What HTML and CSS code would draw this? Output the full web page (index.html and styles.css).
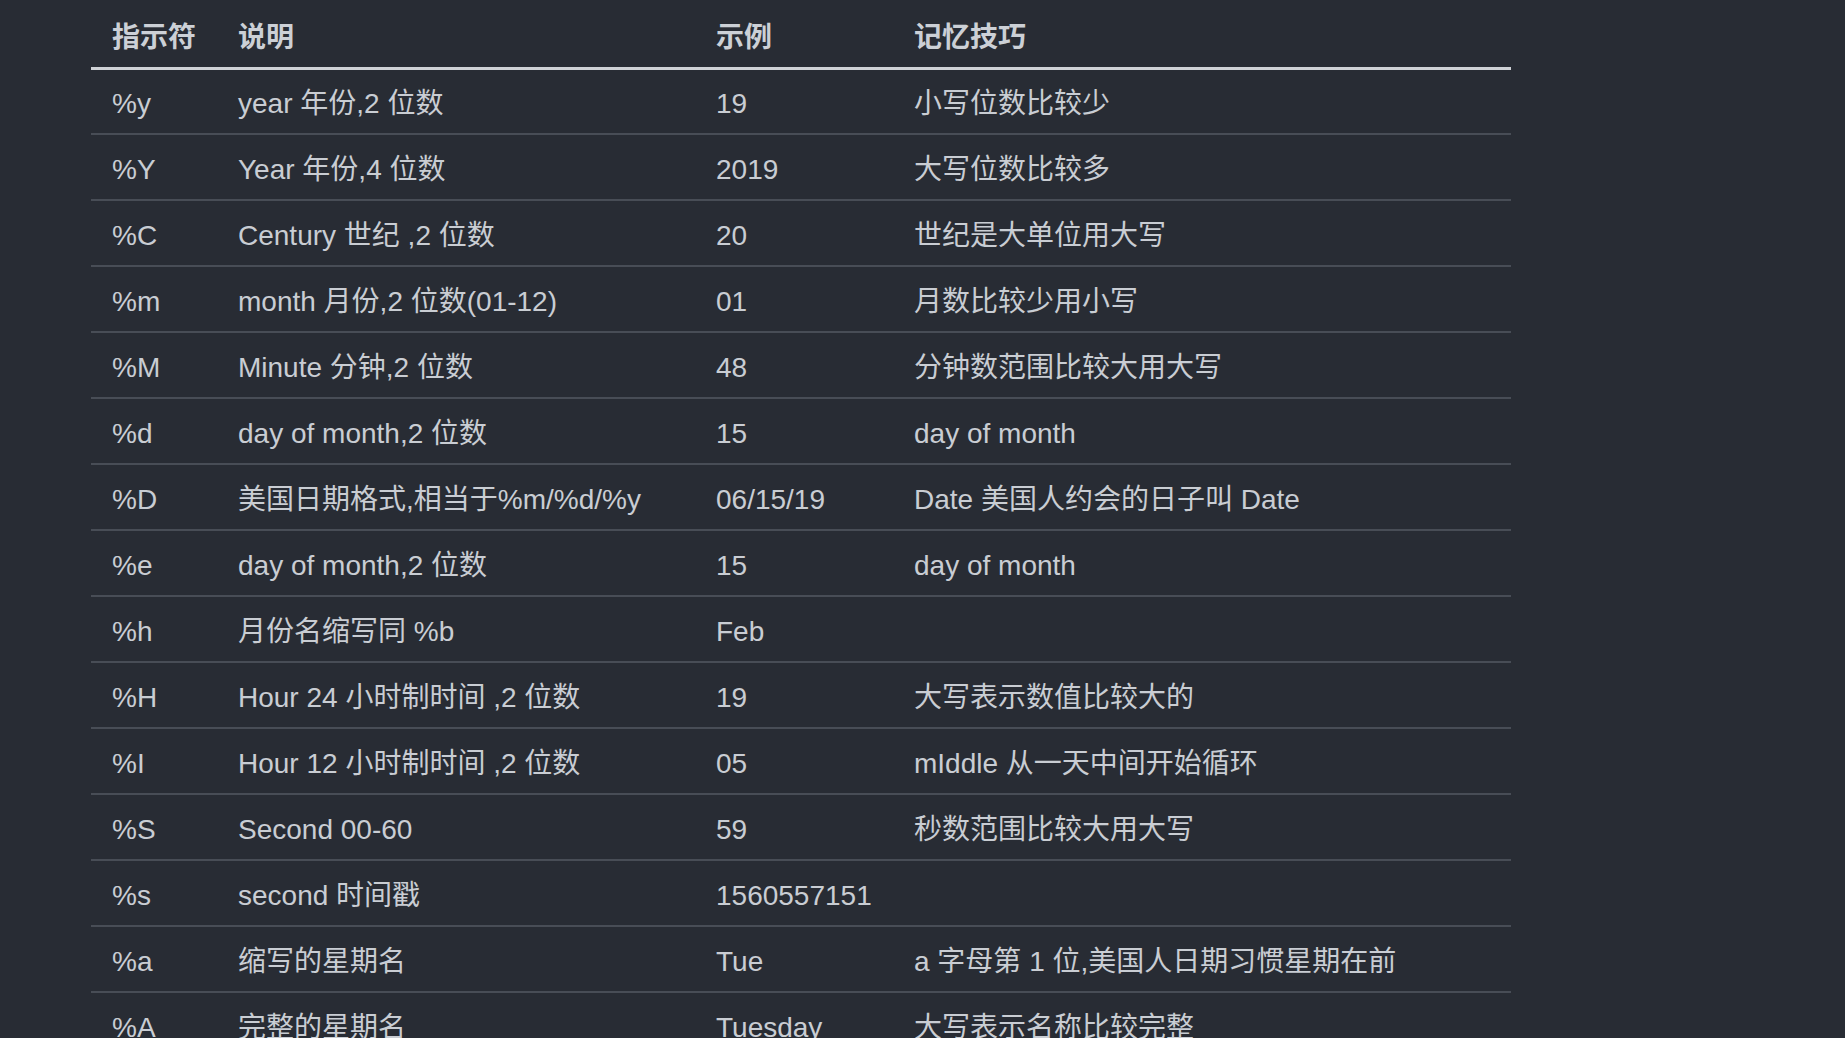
FILE: index.html
```html
<!DOCTYPE html>
<html lang="zh">
<head>
<meta charset="utf-8">
<title>date 格式</title>
<link rel="stylesheet" href="styles.css">
</head>
<body>
<table class="fmt">
  <thead>
    <tr><th class="c1">指示符</th><th class="c2">说明</th><th class="c3">示例</th><th class="c4">记忆技巧</th></tr>
  </thead>
  <tbody>
    <tr><td>%y</td><td>year 年份,2 位数</td><td>19</td><td>小写位数比较少</td></tr>
    <tr><td>%Y</td><td>Year 年份,4 位数</td><td>2019</td><td>大写位数比较多</td></tr>
    <tr><td>%C</td><td>Century 世纪 ,2 位数</td><td>20</td><td>世纪是大单位用大写</td></tr>
    <tr><td>%m</td><td>month 月份,2 位数(01-12)</td><td>01</td><td>月数比较少用小写</td></tr>
    <tr><td>%M</td><td>Minute 分钟,2 位数</td><td>48</td><td>分钟数范围比较大用大写</td></tr>
    <tr><td>%d</td><td>day of month,2 位数</td><td>15</td><td>day of month</td></tr>
    <tr><td>%D</td><td>美国日期格式,相当于%m/%d/%y</td><td>06/15/19</td><td>Date 美国人约会的日子叫 Date</td></tr>
    <tr><td>%e</td><td>day of month,2 位数</td><td>15</td><td>day of month</td></tr>
    <tr><td>%h</td><td>月份名缩写同 %b</td><td>Feb</td><td></td></tr>
    <tr><td>%H</td><td>Hour 24 小时制时间 ,2 位数</td><td>19</td><td>大写表示数值比较大的</td></tr>
    <tr><td>%I</td><td>Hour 12 小时制时间 ,2 位数</td><td>05</td><td>mIddle 从一天中间开始循环</td></tr>
    <tr><td>%S</td><td>Second 00-60</td><td>59</td><td>秒数范围比较大用大写</td></tr>
    <tr><td>%s</td><td>second 时间戳</td><td>1560557151</td><td></td></tr>
    <tr><td>%a</td><td>缩写的星期名</td><td>Tue</td><td>a 字母第 1 位,美国人日期习惯星期在前</td></tr>
    <tr><td>%A</td><td>完整的星期名</td><td>Tuesday</td><td>大写表示名称比较完整</td></tr>
  </tbody>
</table>
</body>
</html>
```

FILE: styles.css
```css
html, body {
  margin: 0;
  padding: 0;
  background: #282c34;
  overflow: hidden;
}
body {
  color: #c9cdd3;
  font-family: "Liberation Sans", "Noto Sans CJK SC", sans-serif;
  font-size: 28px;
}
.fmt {
  margin: 2px 0 0 91px;
  width: 1420px;
  border-collapse: collapse;
  table-layout: fixed;
}
.fmt th, .fmt td {
  box-sizing: border-box;
  text-align: left;
  padding: 5px 0 0 21px;
  height: 66px;
  line-height: 34px;
  white-space: nowrap;
  vertical-align: middle;
}
.fmt th {
  font-weight: bold;
  color: #ccd0d6;
  height: 66px;
  padding-top: 7px;
}
.fmt thead tr {
  border-bottom: 3px solid #cfd2d6;
}
.fmt tbody tr {
  border-bottom: 2px solid #484d56;
}
.c1 { width: 126px; }
.c2 { width: 478px; }
.c3 { width: 198px; }
.c4 { width: auto; }
```
